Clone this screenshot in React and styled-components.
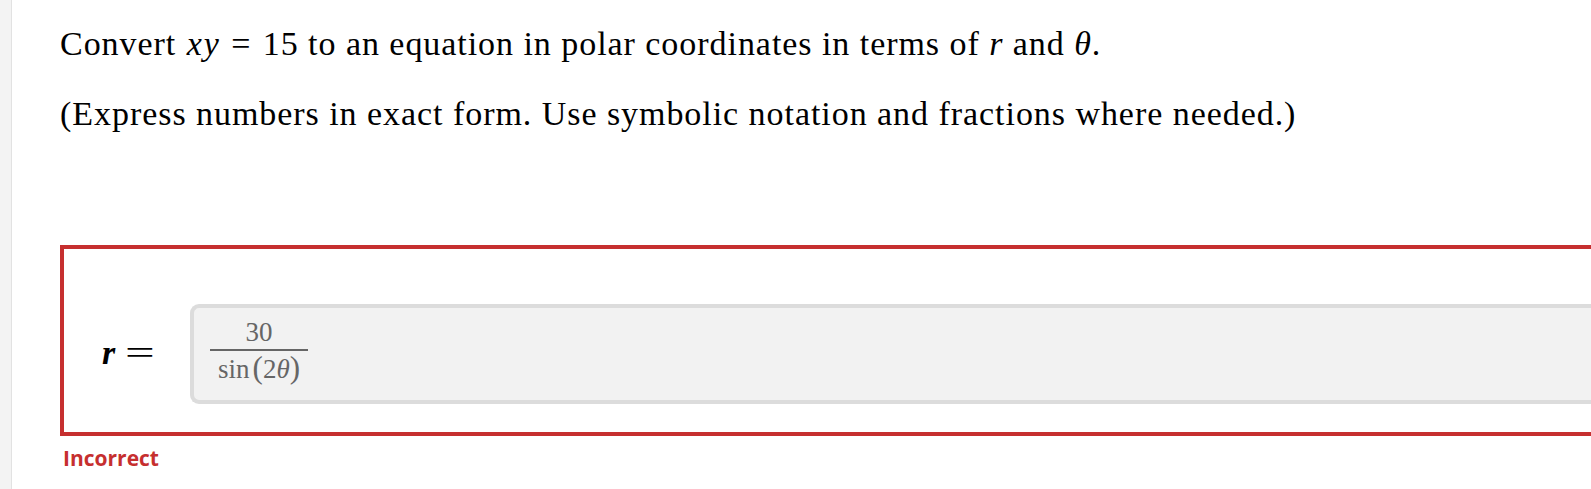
import React from "react";
import styled, { createGlobalStyle } from "styled-components";

const GlobalStyle = createGlobalStyle`
  html, body {
    margin: 0;
    padding: 0;
    background: #ffffff;
  }
  body {
    font-family: "Liberation Serif", "Times New Roman", serif;
    overflow: hidden;
  }
`;

const Page = styled.div`
  display: flex;
  width: 100%;
  height: 489px;
`;

const SideStrip = styled.div`
  width: 11px;
  flex: none;
  background: #f3f3f3;
  border-right: 1px solid #e2e2e2;
`;

const Content = styled.div`
  flex: 1;
  padding: 22px 0 0 48px;
  min-width: 0;
`;

const Prompt = styled.p`
  margin: 0 0 ${(p) => p.gap || 0}px;
  font-size: 34px;
  line-height: 44px;
  letter-spacing: 0.95px;
  color: #000;
  white-space: nowrap;
`;

const Var = styled.span`
  font-style: italic;
  margin: 0 ${(p) => p.space || 0}px;
`;

const Op = styled.span`
  margin: 0 ${(p) => p.space || 0}px;
`;

const AnswerBox = styled.div`
  margin-top: 109px;
  height: 191px;
  box-sizing: border-box;
  border: 4px solid #c62f2f;
  border-right: none;
  display: flex;
  align-items: flex-start;
  padding: 55px 0 0 38px;
`;

const Label = styled.div`
  width: 88px;
  flex: none;
  margin-top: 29px;
  font-size: 34px;
  line-height: 40px;
  white-space: nowrap;
`;

const LabelVar = styled.span`
  font-style: italic;
  font-weight: bold;
  margin-right: 10px;
`;

const Equals = styled.span`
  display: inline-block;
  transform: scaleX(1.55);
  transform-origin: left center;
`;

const InputField = styled.div`
  flex: 1;
  height: 100px;
  box-sizing: border-box;
  background: #f2f2f2;
  border: 4px solid #dcdcdc;
  border-right: none;
  border-radius: 9px 0 0 9px;
  display: flex;
  align-items: center;
  padding-left: 16px;
`;

const Fraction = styled.div`
  display: inline-flex;
  flex-direction: column;
  align-items: center;
  color: #666;
  font-size: 27px;
  line-height: 30px;
  margin-top: -7px;
`;

const Numer = styled.div`
  padding-bottom: 2px;
  border-bottom: 2px solid #666;
  text-align: center;
  width: 98px;
  box-sizing: border-box;
`;

const Denom = styled.div`
  padding-top: 2px;
  white-space: nowrap;
`;

const Paren = styled.span`
  font-size: 31px;
  margin-left: ${(p) => p.left || 0}px;
`;

const Feedback = styled.div`
  margin: 8px 0 0 3px;
  font-family: "Open Sans", "Liberation Sans", sans-serif;
  font-weight: 700;
  font-size: 21px;
  color: #c62f2f;
`;

export default function App() {
  return (
    <>
      <GlobalStyle />
      <Page>
        <SideStrip />
        <Content>
          <Prompt gap={26}>
            Convert <Var space={1}>x</Var>
            <Var>y</Var> <Op space={2}>=</Op> 15 to an equation in polar
            coordinates in terms of <Var>r</Var> and <Var>θ</Var>.
          </Prompt>
          <Prompt>
            (Express numbers in exact form. Use symbolic notation and fractions
            where needed.)
          </Prompt>
          <AnswerBox>
            <Label>
              <LabelVar>r</LabelVar>
              <Equals>=</Equals>
            </Label>
            <InputField>
              <Fraction>
                <Numer>30</Numer>
                <Denom>
                  sin<Paren left={3}>(</Paren>2<i>θ</i>
                  <Paren>)</Paren>
                </Denom>
              </Fraction>
            </InputField>
          </AnswerBox>
          <Feedback>Incorrect</Feedback>
        </Content>
      </Page>
    </>
  );
}
